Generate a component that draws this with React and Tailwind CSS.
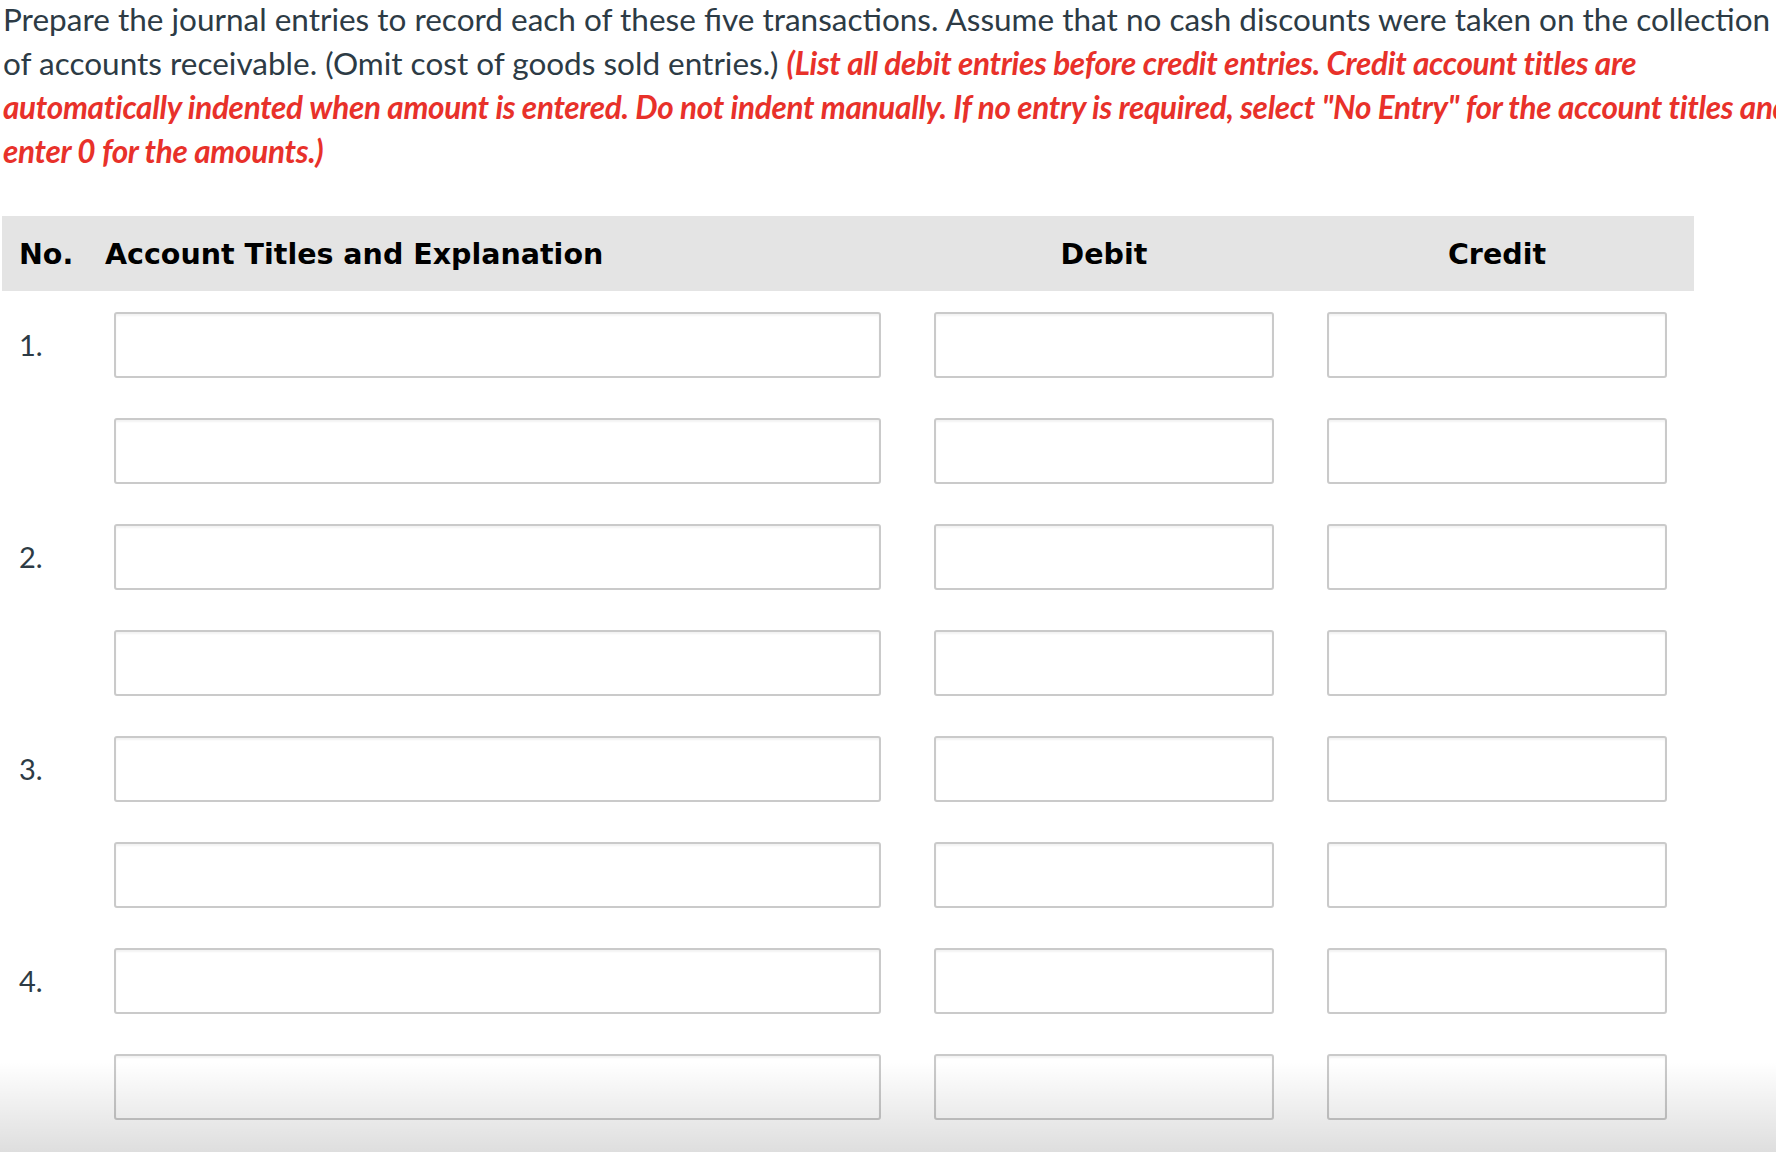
const rows = ["1.", "", "2.", "", "3.", "", "4.", ""];

function Field({ width }) {
  return (
    <div
      className={`${width} h-[66px] rounded-[3px] border-2 border-[#cacaca] bg-white shadow-[inset_0_2px_2px_rgba(0,0,0,0.05)]`}
    />
  );
}

export default function App() {
  return (
    <div className="relative w-[1776px] h-[1152px] overflow-hidden bg-white">
      {/* instructions */}
      <p className="whitespace-nowrap pl-[3px] -mt-[3px] font-['Lato',sans-serif] text-[31.5px] leading-[44px] text-[#2d3b45]">
        Prepare the journal entries to record each of these five transactions. Assume that no cash discounts were taken on the collection
        <br />
        of accounts receivable. (Omit cost of goods sold entries.){" "}
        <span className="font-bold italic tracking-[-0.3px] text-[#e8312a]">
          (List all debit entries before credit entries. Credit account titles are
        </span>
        <br />
        <span className="font-bold italic tracking-[-0.3px] text-[#e8312a]">
          automatically indented when amount is entered. Do not indent manually. If no entry is required, select "No Entry" for the account titles and
        </span>
        <br />
        <span className="font-bold italic tracking-[-0.3px] text-[#e8312a]">enter 0 for the amounts.)</span>
      </p>

      <div className="ml-[2px] mt-[43px]">
        {/* table header */}
        <div className="flex h-[75px] w-[1692px] items-center bg-[#e4e4e4] pt-[4px] font-['DejaVu_Sans',sans-serif] text-[28.5px] font-bold text-black">
          <div className="w-[103px] pl-[17px]">No.</div>
          <div className="w-[776px]">Account Titles and Explanation</div>
          <div className="ml-[53px] w-[340px] text-center">Debit</div>
          <div className="ml-[53px] w-[340px] text-center">Credit</div>
        </div>

        {/* entry rows */}
        <div className="mt-[21px] flex flex-col gap-[40px]">
          {rows.map((no, i) => (
            <div key={i} className="flex items-center">
              <div className="w-[112px] pl-[17px] font-['Lato',sans-serif] text-[29px] text-[#2d3b45]">
                {no}
              </div>
              <Field width="w-[767px]" />
              <div className="ml-[53px]">
                <Field width="w-[340px]" />
              </div>
              <div className="ml-[53px]">
                <Field width="w-[340px]" />
              </div>
            </div>
          ))}
        </div>
      </div>

      {/* bottom fade */}
      <div className="pointer-events-none absolute inset-x-0 bottom-0 h-[90px] bg-linear-to-b from-transparent to-black/[0.13]" />
    </div>
  );
}
